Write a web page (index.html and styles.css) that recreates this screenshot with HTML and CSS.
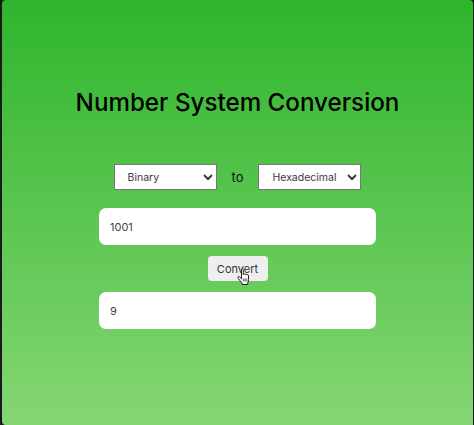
FILE: index.html
```html
<!DOCTYPE html>
<html lang="en">
<head>
    <meta charset="UTF-8">
    <meta name="viewport" content="width=device-width, initial-scale=1.0">
    <title>Number System Conversion</title>
    <link rel="stylesheet" href="styles.css">
</head>
<body>
    <div class="main-container">
        <h1 class="title">Number System Conversion</h1>

        <div class="select-row">
            <select class="base-select">
                <option>Binary</option>
            </select>
            <span class="to-label">to</span>
            <select class="base-select">
                <option>Hexadecimal</option>
            </select>
        </div>

        <input class="num-input" type="text" value="1001">

        <div class="btn-wrap">
            <button class="convert-btn" type="button">Convert</button>
            <!-- hand cursor sitting on the button -->
            <svg class="hand-cursor" width="14" height="17" viewBox="0 0 14 17">
                <path d="M4.5 1.5C4.5.4 6.300.4 6.300 1.500V6.500C6.500 5.600 8 5.600 8.100 6.700 8.300 5.900 9.700 6 9.800 7.100 10 6.400 11.500 6.500 11.500 7.600V11.500C11.500 13 11.200 14 10.700 15V16.500H5.200V15.200C3.800 13.800 2.300 11.800 1 10 .4 9 1.500 8 2.400 8.800L4.500 10.800Z" fill="#fff" stroke="#222" stroke-width="1" stroke-linejoin="round"/>
                <path d="M6.300 10.500V13.500M8.100 10.500V13.500M9.800 10.500V13.500" stroke="#222" stroke-width=".8" fill="none"/>
            </svg>
        </div>

        <input class="num-input" type="text" value="9">
    </div>
</body>
</html>
```

FILE: styles.css
```css
html, body {
    height: 100%;
}

body {
    margin: 0;
    padding: 0;
    background-color: #1a1a1a;
    font-family: Inter, "Open Sans", sans-serif;
    overflow: hidden;
}

.main-container {
    box-sizing: border-box;
    height: 425px;
    margin-left: 2px;
    margin-right: 1px;
    padding-top: 88px;
    display: flex;
    flex-direction: column;
    align-items: center;
    background: linear-gradient(to bottom, #2fb52d, #85d673);
    border-radius: 4px 4px 0 4px;
}

.title {
    margin: 0 0 46px;
    font-size: 24.2px;
    line-height: 30px;
    font-weight: 500;
    color: #000;
}

.select-row {
    display: flex;
    align-items: center;
    gap: 15px;
    margin-bottom: 18px;
}

.base-select {
    box-sizing: border-box;
    width: 103px;
    height: 26px;
    padding: 0 0 0 9px;
    font-family: inherit;
    font-size: 10.5px;
    color: #443344;
    background-color: #fff;
    border: 1px solid #777;
    border-radius: 0;
}

.to-label {
    font-size: 13px;
    color: #111;
}

.num-input {
    box-sizing: border-box;
    display: block;
    width: 277px;
    height: 37px;
    padding: 0 11px;
    font-family: inherit;
    font-size: 11px;
    color: #444;
    background-color: #fff;
    border: none;
    border-radius: 7px;
}

.btn-wrap {
    position: relative;
    margin: 11px 0;
}

.convert-btn {
    display: block;
    width: 60px;
    height: 25px;
    padding: 0;
    font-family: inherit;
    font-size: 11px;
    color: #333;
    background-color: #efefef;
    border: none;
    border-radius: 4px;
}

.hand-cursor {
    position: absolute;
    left: 29px;
    top: 12px;
}
```
